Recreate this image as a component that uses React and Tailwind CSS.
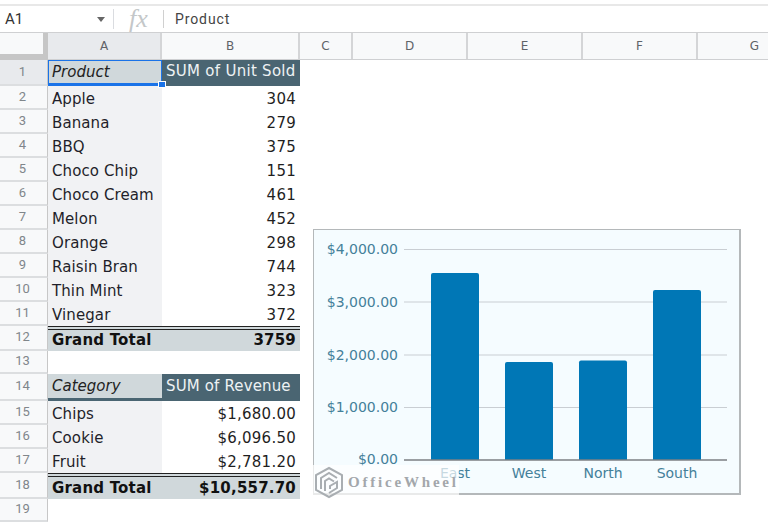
const rows1 = [["Apple","304"],["Banana","279"],["BBQ","375"],["Choco Chip","151"],["Choco Cream","461"],["Melon","452"],["Orange","298"],["Raisin Bran","744"],["Thin Mint","323"],["Vinegar","372"]];
const rows2 = [["Chips","$1,680.00"],["Cookie","$6,096.50"],["Fruit","$2,781.20"]];

function RowNum({ n, h, active }) {
  return (
    <div className={`w-[48px] shrink-0 flex items-center justify-center pr-[2px] pb-[1px] border-b-2 border-[#dcdee0] border-r border-r-[#c7c7c7] text-[13px] text-[#80868b] font-['Roboto',sans-serif] ${active ? "bg-[#e8eaed]" : "bg-[#f8f9fa]"}`} style={{ height: h }}>{n}</div>
  );
}

function Row({ n, h, a, b, kind, tight }) {
  let ac = "bg-[#f1f2f4] text-[#1f1f2a] pt-[2px] tracking-[0.1px]", bc = "bg-white text-[#1f1f1f] justify-end pt-[2px] tracking-[0.25px]";
  if (kind === "blank") { ac = "bg-white"; bc = "bg-white"; }
  if (kind === "total") { ac = "bg-[#d0d8db] text-[#111] font-bold tracking-[0.2px] border-t-[4px] border-double border-[#222]"; bc = "bg-[#d0d8db] text-[#111] font-bold tracking-[0.2px] justify-end border-t-[4px] border-double border-[#222]"; }
  if (kind === "head") { ac = "bg-[#d0d8db] italic text-[#222] pt-[1px] border-b-[3px] border-[#4a6572]"; bc = `bg-[#4a6572] text-[#eef2f4] pb-[3px] ${tight ? "tracking-[0.14px]" : "tracking-[0.28px]"}`; }
  return (
    <div className="flex">
      <RowNum n={n} h={h} active={n === 1} />
      <div className={`w-[114px] shrink-0 flex items-center pl-[4px] ${ac}`} style={{ height: h }}>{a}</div>
      <div className={`w-[138px] shrink-0 flex items-center whitespace-nowrap px-[4px] ${bc}`} style={{ height: h }}>{b}</div>
    </div>
  );
}

function Col({ w, c, active }) {
  return <div className={`shrink-0 h-full flex items-center justify-center border-r-2 border-[#d4d5d7] text-[12px] text-[#5f6368] ${active ? "bg-[#e8eaed]" : "bg-[#f8f9fa]"}`} style={{ width: w }}>{c}</div>;
}

function Chart() {
  const grid = [[249.5,"$4,000.00"],[302,"$3,000.00"],[355,"$2,000.00"],[407.5,"$1,000.00"]];
  const bars = [[431,273,"East"],[505,362,"West"],[579,360.5,"North"],[653,290,"South"]];
  return (
    <div className="absolute left-[313px] top-[229px] w-[428px] h-[266px] border-t border-l border-r-2 border-b-2 border-[#b4b8ba] bg-[#f5fcff]">
      <svg width="425" height="263" viewBox="314 230 425 263" className="block font-['DejaVu_Sans',sans-serif]">
        {grid.map(([y, t]) => (
          <g key={t}>
            <line x1="404" x2="727" y1={y} y2={y} stroke="#c9ced3" strokeWidth="1" />
            <text x="398" y={y + 4.5} textAnchor="end" fontSize="14" fill="#44809a">{t}</text>
          </g>
        ))}
        {bars.map(([x, y, t]) => (
          <g key={t}>
            <path d={`M${x} 460V${y + 2}q0 -2 2 -2H${x + 46}q2 0 2 2V460Z`} fill="#0077b6" />
            <text x={x + 24} y="478" textAnchor="middle" fontSize="14" fill="#44809a">{t}</text>
          </g>
        ))}
        <line x1="404" x2="727" y1="460" y2="460" stroke="#7b7f83" strokeWidth="1.5" />
        <text x="398" y="464" textAnchor="end" fontSize="14" fill="#44809a">$0.00</text>
      </svg>
    </div>
  );
}

function Watermark() {
  return (
    <div className="absolute left-[313px] top-[465px] w-[146px] h-[33px] flex items-center bg-white/70">
      <svg width="30" height="33" viewBox="0 0 30 33" fill="none" stroke="#a9aeb2" strokeWidth="2" className="shrink-0 ml-[1px] mt-[2px]">
        <path d="M15 2 L28 9 V24 L15 31 L2 24 V9 Z" />
        <path d="M7 23 V12 L15 7 L23 12" />
        <path d="M11 25 V15 L15 12.5 L20 15.5" />
        <path d="M15 27 L23 22 V16 L16 20 V23" />
      </svg>
      <span className="ml-[4px] mt-[2px] text-[15px] font-bold tracking-[2.8px] text-[#a3a7ab] whitespace-nowrap font-['Liberation_Serif',serif]">OfficeWheel</span>
    </div>
  );
}

export default function App() {
  return (
    <div className="relative w-[768px] h-[522px] overflow-hidden bg-white font-['DejaVu_Sans',sans-serif] text-[15px]">
      <div className="h-[4px]" />
      <div className="h-[2px] bg-[#e8e8e8]" />
      <div className="h-[26px] flex items-center font-['Roboto',sans-serif] text-[#444]">
        <div className="w-[113px] h-full flex items-center justify-between pl-[5px] pr-[8px]">
          <span className="text-[15px] text-[#333]">A1</span>
          <span className="w-0 h-0 border-x-[4px] border-x-transparent border-t-[5px] border-t-[#666]" />
        </div>
        <div className="w-px h-[20px] bg-[#dadce0]" />
        <div className="w-[49px] flex justify-center text-[26px] leading-[26px] italic text-[#c4c7c9] font-['Liberation_Serif',serif]">fx</div>
        <div className="w-px h-[18px] bg-[#d0d0d0]" />
        <span className="ml-[11px] tracking-[0.9px] text-[14px]">Product</span>
      </div>
      <div className="h-[28px] flex border-t border-[#cfd0d2]">
        <div className="w-[48px] shrink-0 h-full bg-[#f8f9fa] border-r-[5px] border-b-[6px] border-[#c6c6c6]" />
        <div className="flex h-full grow border-b border-[#cfd0d2]">
          <Col w={114} c="A" active />
          <Col w={138} c="B" />
          <Col w={53} c="C" />
          <Col w={115} c="D" />
          <Col w={115} c="E" />
          <Col w={115} c="F" />
          <Col w={115} c="G" />
        </div>
      </div>
      <Row n={1} h={26} a="Product" b="SUM of Unit Sold" kind="head" />
      {rows1.map(([a, b], i) => <Row key={a} n={i + 2} h={24} a={a} b={b} />)}
      <Row n={12} h={25} a="Grand Total" b="3759" kind="total" />
      <Row n={13} h={23} a="" b="" kind="blank" />
      <Row n={14} h={27} a="Category" b="SUM of Revenue" kind="head" tight />
      {rows2.map(([a, b], i) => <Row key={a} n={i + 15} h={24} a={a} b={b} />)}
      <Row n={18} h={26} a="Grand Total" b="$10,557.70" kind="total" />
      <Row n={19} h={23} a="" b="" kind="blank" />
      <div className="absolute left-[48px] top-[60px] w-[114px] h-[26px] border-[1.5px] border-b-[3px] border-[#1a73e8] pointer-events-none" />
      <div className="absolute left-[158px] top-[81px] w-[8px] h-[7px] bg-[#1a73e8] border border-white" />
      <Chart />
      <Watermark />
    </div>
  );
}
